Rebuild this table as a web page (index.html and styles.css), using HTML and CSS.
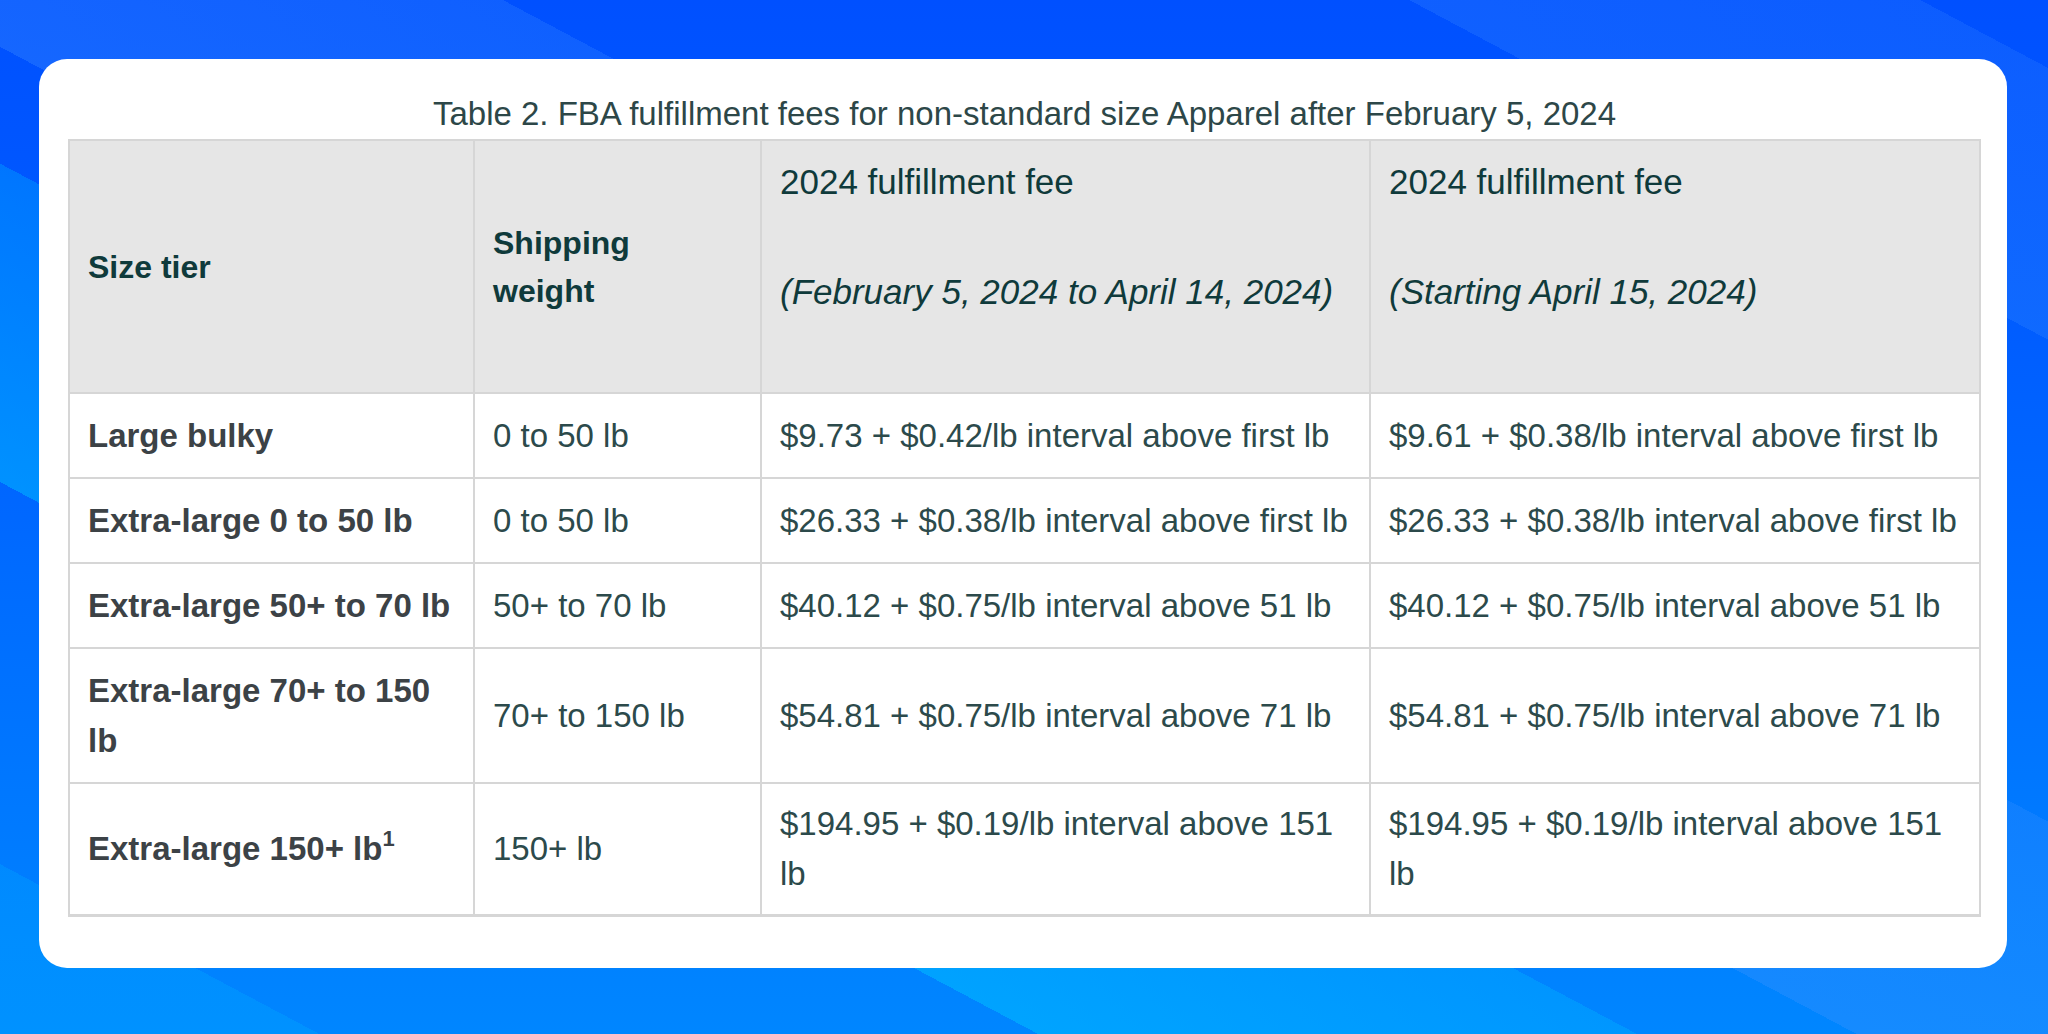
FILE: index.html
```
<!DOCTYPE html>
<html lang="en">
<head>
<meta charset="utf-8">
<title>FBA fulfillment fees</title>
<link rel="stylesheet" href="styles.css">
</head>
<body>
<div class="bg">
  <div class="card">
    <table class="fees">
      <caption>Table 2. FBA fulfillment fees for non-standard size Apparel after February 5, 2024</caption>
      <colgroup>
        <col class="c1"><col class="c2"><col class="c3"><col class="c4">
      </colgroup>
      <thead>
        <tr>
          <th class="bold">Size tier</th>
          <th class="bold ship">Shipping weight</th>
          <th class="fee"><p>2024 fulfillment fee</p><p class="sub"><em>(February 5, 2024 to April 14, 2024)</em></p></th>
          <th class="fee"><p>2024 fulfillment fee</p><p class="sub"><em>(Starting April 15, 2024)</em></p></th>
        </tr>
      </thead>
      <tbody>
        <tr>
          <td class="tier">Large bulky</td>
          <td>0 to 50 lb</td>
          <td>$9.73 + $0.42/lb interval above first lb</td>
          <td>$9.61 + $0.38/lb interval above first lb</td>
        </tr>
        <tr>
          <td class="tier">Extra-large 0 to 50 lb</td>
          <td>0 to 50 lb</td>
          <td>$26.33 + $0.38/lb interval above first lb</td>
          <td>$26.33 + $0.38/lb interval above first lb</td>
        </tr>
        <tr>
          <td class="tier">Extra-large 50+ to 70 lb</td>
          <td>50+ to 70 lb</td>
          <td>$40.12 + $0.75/lb interval above 51 lb</td>
          <td>$40.12 + $0.75/lb interval above 51 lb</td>
        </tr>
        <tr>
          <td class="tier">Extra-large 70+ to 150 lb</td>
          <td>70+ to 150 lb</td>
          <td>$54.81 + $0.75/lb interval above 71 lb</td>
          <td>$54.81 + $0.75/lb interval above 71 lb</td>
        </tr>
        <tr class="last">
          <td class="tier">Extra-large 150+ lb<sup>1</sup></td>
          <td>150+ lb</td>
          <td>$194.95 + $0.19/lb interval above 151 lb</td>
          <td>$194.95 + $0.19/lb interval above 151 lb</td>
        </tr>
      </tbody>
    </table>
  </div>
</div>
</body>
</html>
```
FILE: styles.css
```
* { box-sizing: border-box; }
html, body { margin: 0; padding: 0; }
body {
  width: 2048px;
  height: 1034px;
  overflow: hidden;
  font-family: "Liberation Sans", Arial, sans-serif;
}
.bg {
  width: 2048px;
  height: 1034px;
  padding: 59px 41px 66px 39px;
  background:
    linear-gradient(28deg,
      rgba(0,200,255,0.18) 0%, rgba(0,200,255,0.18) 8%,
      rgba(0,0,0,0) 8%, rgba(0,0,0,0) 26%,
      rgba(0,205,255,0.42) 26%, rgba(0,190,255,0.3) 41%,
      rgba(0,0,0,0) 41%, rgba(0,0,0,0) 46.5%,
      rgba(70,150,255,0.3) 46.5%, rgba(70,150,255,0.22) 61.3%,
      rgba(0,0,0,0) 61.3%, rgba(0,0,0,0) 84%,
      rgba(70,150,255,0.22) 84%, rgba(70,150,255,0.18) 96.8%,
      rgba(0,0,0,0) 96.8%),
    linear-gradient(180deg, #0050ff 0%, #005cff 30%, #0074ff 70%, #0086ff 100%);
}
.card {
  width: 1968px;
  height: 909px;
  background: #ffffff;
  border-radius: 28px;
  padding: 30px 28px 0 29px;
}
.fees {
  width: 1911px;
  border-collapse: collapse;
  table-layout: fixed;
  font-size: 33px;
  line-height: 50px;
  color: #2c4a4b;
}
.fees caption {
  caption-side: top;
  text-align: center;
  color: #2d4748;
  font-size: 33px;
  line-height: 50px;
  padding: 0;
}
col.c1 { width: 405px; }
col.c2 { width: 287px; }
col.c3 { width: 609px; }
col.c4 { width: 610px; }
.fees th, .fees td {
  border: 2px solid #d6d6d6;
  padding: 17px 18px 16px 18px;
  text-align: left;
  vertical-align: middle;
}
.fees thead th {
  background: #e6e6e6;
  color: #0f3a3b;
  font-weight: normal;
  padding-top: 16px;
  padding-bottom: 16px;
}
.fees thead th.fee { font-size: 35px; }
.fees thead th.bold { font-weight: bold; font-size: 32px; line-height: 48px; }
.fees thead th.ship { padding-right: 60px; }
.fees th p { margin: 0; }
.fees th p.sub { margin: 60px 0 59px; }
.fees th em { font-style: italic; }
.fees td.tier {
  font-weight: bold;
  color: #3c4246;
}
.fees sup {
  font-size: 22px;
  line-height: 0;
  vertical-align: 14px;
}
.fees tr.last td { border-bottom-width: 3px; padding-top: 15px; padding-bottom: 15px; }
```
